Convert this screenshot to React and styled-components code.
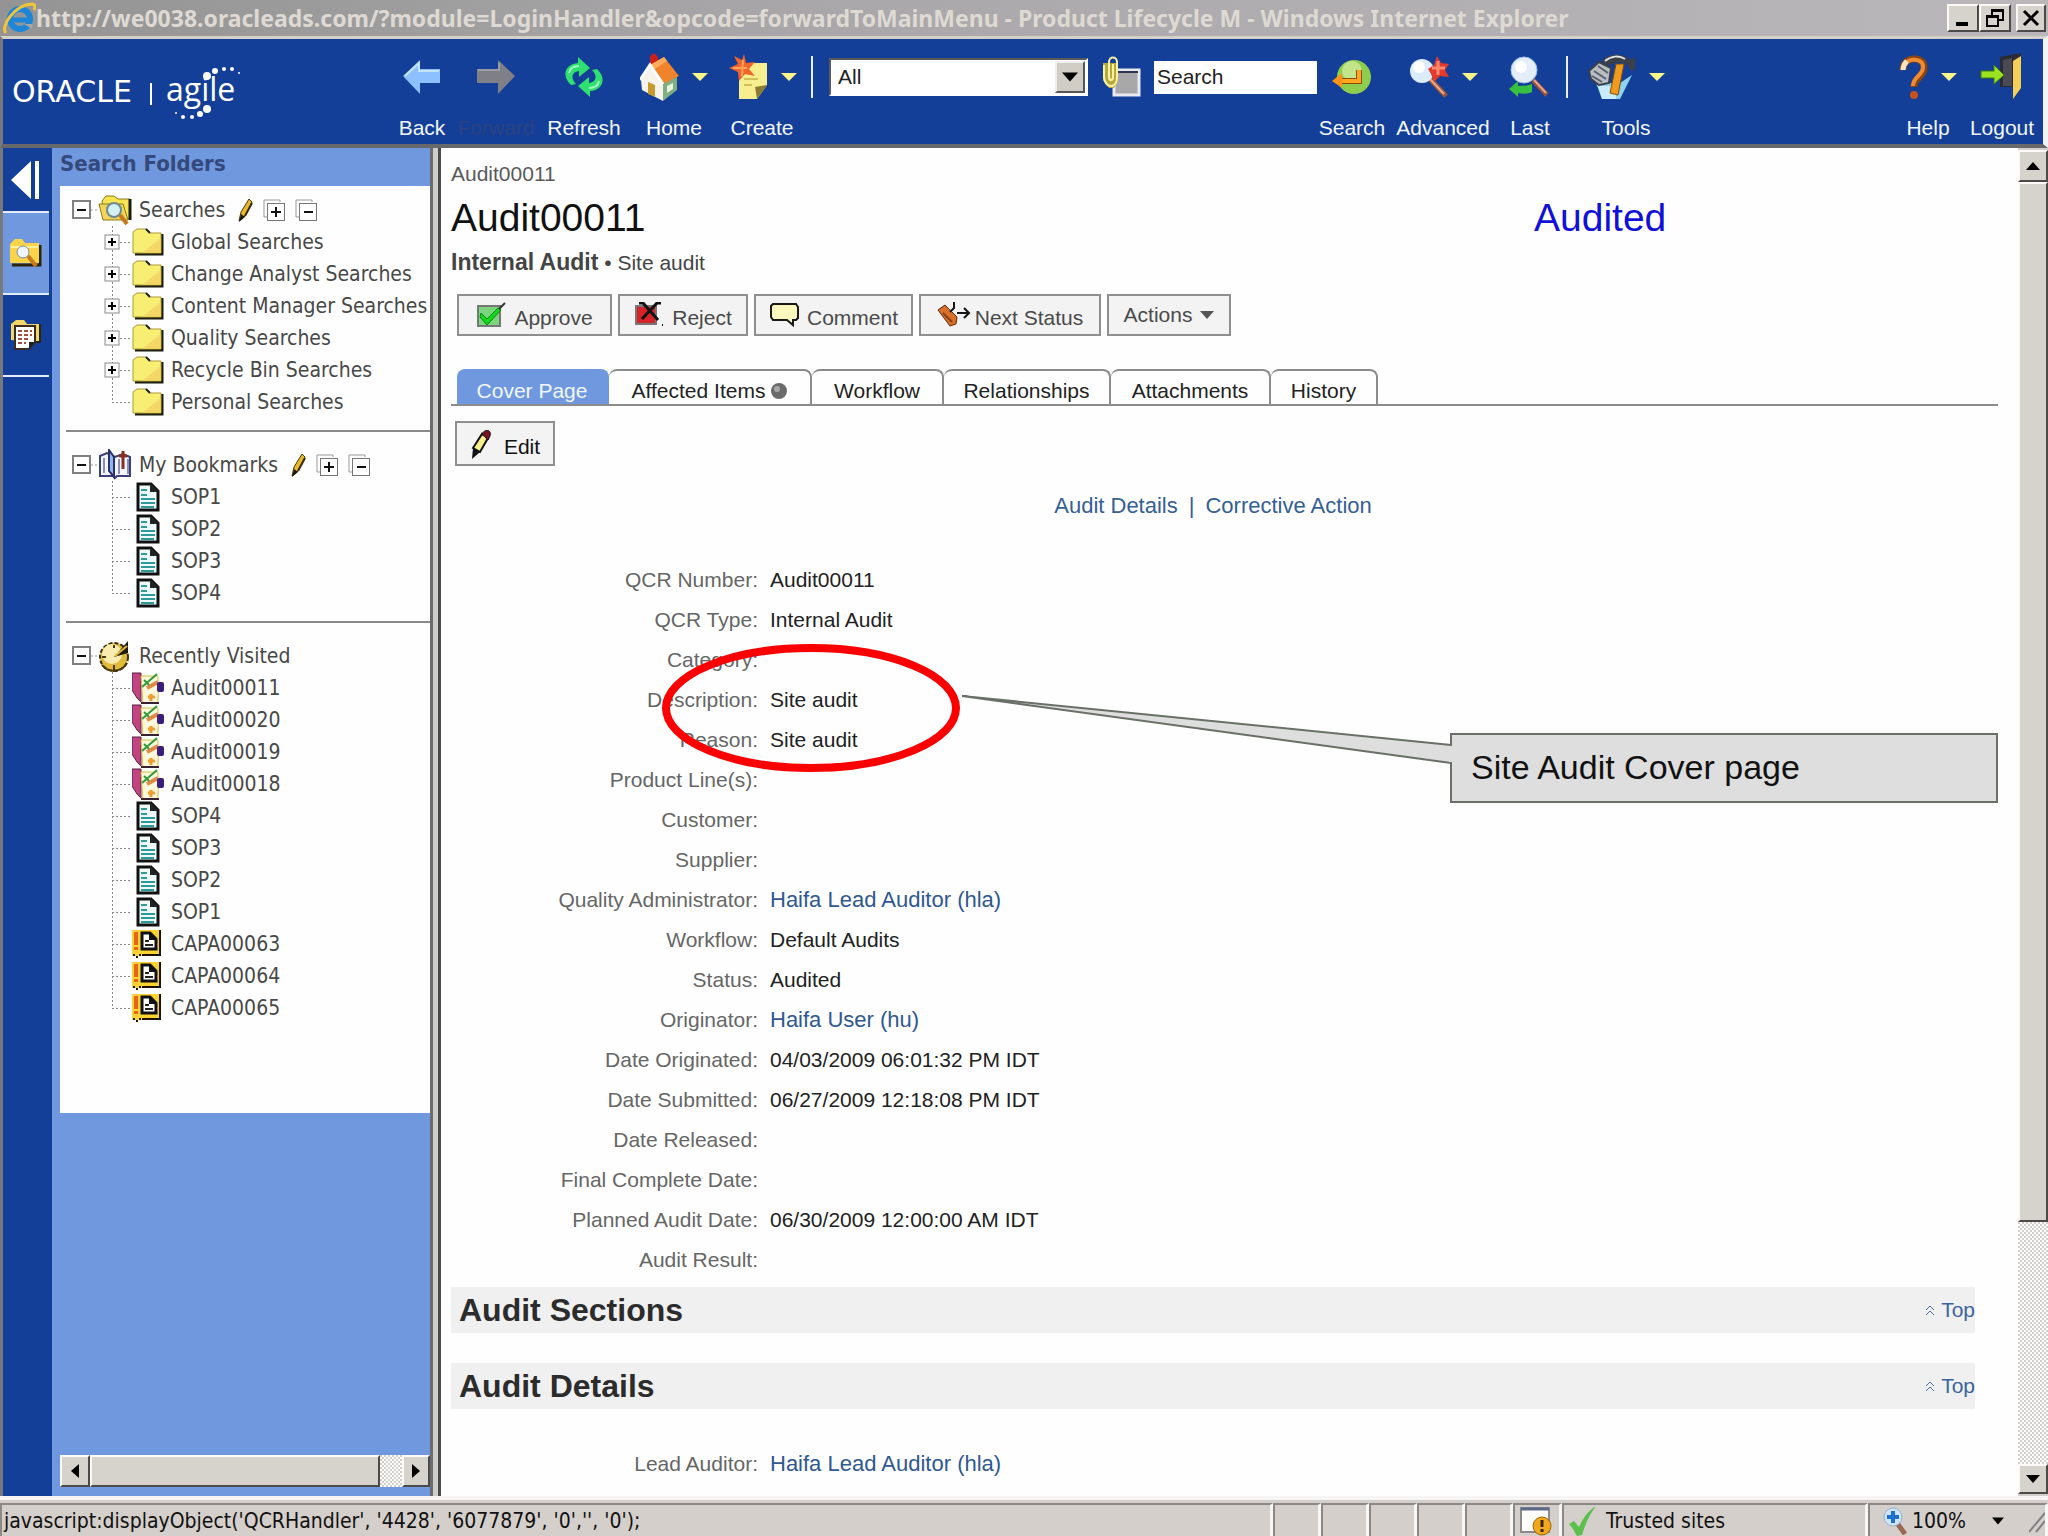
import React from "react";
import styled, { createGlobalStyle } from "styled-components";

const UI = `"DejaVu Sans Condensed", "DejaVu Sans", sans-serif`;
const ARIAL = `"Liberation Sans", Arial, sans-serif`;

const GlobalStyle = createGlobalStyle`
  * {
    box-sizing: border-box;
  }

  body {
    margin: 0;
    background: #d5cfcb;
    font-family: ${ARIAL};
    font-size: 21px;
    line-height: 26px;
    color: #1c1c1c;
  }

  button,
  input,
  select {
    font: inherit;
    color: inherit;
    margin: 0;
  }

  a {
    color: inherit;
    text-decoration: none;
  }

  svg {
    display: block;
    flex: none;
  }
`;

/* ---------- icons ---------- */

const IeIcon = () => (
  <svg width="34" height="34" viewBox="0 0 34 34">
    <circle cx="18" cy="18" r="10" fill="none" stroke="#1c86d8" strokeWidth="6" />
    <path d="M10 19h19" stroke="#1c86d8" strokeWidth="5" />
    <path d="M22 23h8v5z" fill="#a6a6a6" />
    <path d="M4 32C-2 26 12 4 30 3c4 0 3 4 2 6" fill="none" stroke="#f0c53a" strokeWidth="3" />
  </svg>
);

const Logo = () => (
  <svg width="250" height="70" viewBox="0 0 250 70" fill="#fff" role="img" aria-label="Oracle Agile">
    <text x="9" y="50" fontFamily="DejaVu Sans" fontSize="30">ORACLE</text>
    <path d="M148 31v22" stroke="#fff" strokeWidth="2" />
    <text x="163" y="49" fontFamily="Open Sans, Noto Sans" fontSize="32">agile</text>
    <circle cx="204" cy="24" r="4" />
    <circle cx="212" cy="19" r="3" />
    <circle cx="221" cy="17" r="2" />
    <circle cx="229" cy="17" r="2" />
    <circle cx="236" cy="21" r="1" />
    <circle cx="204" cy="57" r="4" />
    <circle cx="197" cy="62" r="3" />
    <circle cx="189" cy="65" r="2" />
    <circle cx="180" cy="65" r="2" />
    <circle cx="173" cy="61" r="1" />
  </svg>
);

const BackIcon = () => (
  <svg width="38" height="36" viewBox="0 0 38 36">
    <path d="M0 17L17 1v9h20v14H17v11z" fill="#8cc0ff" />
    <path d="M2 17L16 4v8h20" fill="none" stroke="#c5e2ff" strokeWidth="2" />
  </svg>
);

const ForwardIcon = () => (
  <svg width="38" height="36" viewBox="0 0 38 36">
    <path d="M38 17L21 1v9H0v14h21v11z" fill="#7f7f88" />
    <path d="M1 11h21V4" fill="none" stroke="#9c9ca6" strokeWidth="2" />
  </svg>
);

const RefreshIcon = () => (
  <svg width="42" height="42" viewBox="0 0 42 42" fill="#2fe070">
    <path d="M8 29C-2 20 2 8 15 7V1l12 11-11 9v-6c-7 1-9 7-3 13z" />
    <path d="M34 13c10 9 6 21-7 22v6L15 30l11-9v6c7-1 9-7 3-13z" />
    <path d="M6 17c1-5 5-7 10-7M36 25c-1 5-5 7-10 7" fill="none" stroke="#a5ffc0" strokeWidth="2" />
  </svg>
);

const HomeIcon = () => (
  <svg width="40" height="50" viewBox="0 0 40 50">
    <path d="M10 4l4-3 4 4v10l-8 4z" fill="#c9201f" />
    <path d="M1 28l9-15 13 18v18L2 38z" fill="#f6f3ec" />
    <path d="M23 31l14-6v13L23 49z" fill="#7fae83" />
    <path d="M10 13L24 5l15 19-16 8z" fill="#f0842c" />
    <path d="M10 13L24 5l3 4-14 9z" fill="#ffad5c" />
    <path d="M0 28l10-15 13 19" fill="none" stroke="#fff" strokeWidth="3" />
    <path d="M8 30l7 3v12l-7-3z" fill="#c79a2c" />
    <path d="M27 34l6-3v6l-6 4z" fill="#eaf3df" />
  </svg>
);

const CreateIcon = () => (
  <svg width="42" height="48" viewBox="0 0 42 48">
    <path d="M12 10h28v22L30 46H12z" fill="#f7ef8f" />
    <path d="M40 32L30 46l-2-12z" fill="#8a7a32" />
    <path d="M17 26h14M17 32h8" stroke="#cfc05a" strokeWidth="2" />
    <path d="M17 1l2 9 9-1-6 7 6 7-10-2-6 7-1-9-9-4 9-4-4-8 8 4z" fill="#f1652a" />
    <path d="M16 7l-1 16M6 15h14" stroke="#ffa45c" strokeWidth="2" />
  </svg>
);

const ClipIcon = () => (
  <svg width="40" height="42" viewBox="0 0 40 42">
    <rect x="13" y="14" width="25" height="25" fill="#a8a8a8" stroke="#e9e9f2" strokeWidth="3" />
    <path d="M15 16h22" stroke="#2a3350" strokeWidth="2" />
    <path d="M2 7h15v18l-4 7H8l-6-8z" fill="#b8a840" />
    <path d="M3 9v12c0 6 4 9 7 9 4 0 6-4 6-9V6c0-6-8-6-8 0v15c0 4 4 4 4 0V8" fill="none" stroke="#fbf3a4" strokeWidth="2" />
  </svg>
);

const GoIcon = () => (
  <svg width="40" height="36" viewBox="0 0 40 36">
    <circle cx="22" cy="18" r="17" fill="#8fce4c" />
    <circle cx="20" cy="12" r="10" fill="#c2e48a" />
    <path d="M27 11v11H10" fill="none" stroke="#8a4a00" strokeWidth="6" />
    <path d="M27 11v11H10" fill="none" stroke="#ffa51e" strokeWidth="4" />
    <path d="M0 22l10-8v15z" fill="#ff9416" />
  </svg>
);

const AdvancedIcon = () => (
  <svg width="42" height="44" viewBox="0 0 42 44">
    <path d="M22 24l16 17" stroke="#9d5a3c" strokeWidth="5" />
    <path d="M22 24l14 15" stroke="#f0a888" strokeWidth="2" />
    <circle cx="14" cy="16" r="12" fill="#dcecff" />
    <circle cx="11" cy="12" r="6" fill="#fff" />
    <path d="M29 1l4 7 8 1-4 6 4 7-9-1-6 6-3-8-3-5 6-4z" fill="#e33a2c" />
    <path d="M30 6v14M24 13h13" stroke="#ff8a70" strokeWidth="3" />
  </svg>
);

const LastIcon = () => (
  <svg width="42" height="42" viewBox="0 0 42 42">
    <path d="M24 24l14 15" stroke="#8d5040" strokeWidth="5" />
    <path d="M25 24l12 13" stroke="#e8a68c" strokeWidth="2" />
    <circle cx="15" cy="14" r="13" fill="#e4eefb" stroke="#9cc0ea" strokeWidth="1" />
    <circle cx="12" cy="11" r="6" fill="#fff" />
    <path d="M0 33l9-8v5c5 0 9 0 14-2v8c-4 2-9 2-14 1v4z" fill="#38c040" />
  </svg>
);

const ToolsIcon = () => (
  <svg width="50" height="48" viewBox="0 0 50 48">
    <path d="M9 30l6 16h18l12-24-12 8z" fill="#8ed2f0" />
    <path d="M11 33h18v13H15z" fill="#c8ecfb" />
    <path d="M2 18l10-9 12 6-2 15-10 2-8-6z" fill="#b9bec4" stroke="#3a3f48" strokeWidth="2" />
    <path d="M7 18l12 8M11 13l10 7M5 23l10 6" stroke="#5a606a" strokeWidth="2" />
    <path d="M15 8C20 0 38 0 42 7l6-3v13h-5l-3-6c-8-4-14 0-20 2z" fill="#3c3f46" />
    <path d="M18 8c6-5 14-6 20-2" fill="none" stroke="#dfe3e8" strokeWidth="2" />
    <path d="M29 11h8l-6 31-8-2z" fill="#f09a20" stroke="#7b4a08" strokeWidth="1" />
  </svg>
);

const HelpIcon = () => (
  <svg width="30" height="46" viewBox="0 0 30 46">
    <path d="M4 16C3 2 26 1 25 14c0 9-10 9-10 19" fill="none" stroke="#8a4412" strokeWidth="7" />
    <path d="M4 15C4 3 25 3 24 13c0 9-10 9-10 19" fill="none" stroke="#ee8c34" strokeWidth="4" />
    <path d="M4 16c0-4 2-7 4-9" fill="none" stroke="#ffe4c4" strokeWidth="5" />
    <circle cx="15" cy="41" r="4" fill="#c4521c" />
  </svg>
);

const LogoutIcon = () => (
  <svg width="44" height="48" viewBox="0 0 44 48">
    <path d="M20 4L41 0v34L33 47V34H20z" fill="#2b2b33" />
    <path d="M41 3v32l-8 11V8z" fill="#f5cf55" />
    <path d="M23 7l9-2v28h-9z" fill="#4a4a55" />
    <path d="M1 18h13v-6l10 10-10 9v-6H1z" fill="#9be320" stroke="#3f7a08" strokeWidth="1" />
  </svg>
);

const Caret = () => (
  <svg width="16" height="8" viewBox="0 0 16 8">
    <path d="M0 0h16L8 8z" fill="#fbf68a" />
  </svg>
);

const Triangle = ({ dir = "down", size = 14, color = "#000" }) => {
  const d = { down: "M0 3h14L7 11z", up: "M0 11h14L7 3z", left: "M11 0v14L3 7z", right: "M3 0v14l8-7z" }[dir];
  return (
    <svg width={size} height={size} viewBox="0 0 14 14">
      <path d={d} fill={color} />
    </svg>
  );
};

const CollapseIcon = () => (
  <svg width="30" height="40" viewBox="0 0 30 40">
    <path d="M0 20L20 1v38z" fill="#fff" />
    <path d="M26 1v38" stroke="#fff" strokeWidth="4" />
  </svg>
);

const FolderIcon = () => (
  <svg width="32" height="28" viewBox="0 0 32 28">
    <path d="M30 6v20H3" fill="none" stroke="#1d1d12" strokeWidth="3" />
    <path d="M1 25V4l4-3h9l4 4h11v20z" fill="#f7ee74" stroke="#a99d33" strokeWidth="1" />
    <path d="M29 10v15H10z" fill="#f2cf62" opacity=".7" />
    <path d="M14 1l4 4" stroke="#1d1d12" strokeWidth="2" />
  </svg>
);

const SearchFolderIcon = () => (
  <svg width="34" height="32" viewBox="0 0 34 32">
    <path d="M4 7l4-5h8l4 3h12v20H6z" fill="#f6e452" stroke="#8a7a16" strokeWidth="1" />
    <path d="M32 5v21" stroke="#1d1d12" strokeWidth="3" />
    <path d="M1 10h24l5 16H5z" fill="#f2d65c" stroke="#8a7a16" strokeWidth="1" />
    <circle cx="16" cy="16" r="7" fill="#d4f0f5" stroke="#6d8a90" strokeWidth="2" />
    <path d="M22 21l7 9" stroke="#c8781c" strokeWidth="4" />
  </svg>
);

const RailSearchIcon = () => (
  <svg width="34" height="30" viewBox="0 0 34 30">
    <path d="M3 27h28V7" fill="none" stroke="#2a2410" strokeWidth="3" />
    <path d="M1 25V6l5-5h7l3 4h14v20z" fill="#fbd44a" />
    <path d="M2 9h27" stroke="#fff0a0" strokeWidth="2" />
    <circle cx="14" cy="14" r="6" fill="#eef6fb" stroke="#7a8ea0" strokeWidth="1" />
    <path d="M19 18l8 10" stroke="#c87a1c" strokeWidth="4" />
  </svg>
);

const RailReportIcon = () => (
  <svg width="34" height="34" viewBox="0 0 34 34">
    <path d="M2 22V6l5-4h8l3 4h13v18H20z" fill="#f0d668" />
    <path d="M31 6v18H20" fill="none" stroke="#2a2410" strokeWidth="2" />
    <path d="M6 8h20v16l-6 7H6z" fill="#fff" stroke="#3a2c20" strokeWidth="2" />
    <path d="M26 24l-6 7v-7z" fill="#222" />
    <path d="M9 13h14M9 17h14M9 21h12M9 25h8" stroke="#a5503c" strokeWidth="2" strokeDasharray="4 2" />
  </svg>
);

const BookIcon = () => (
  <svg width="34" height="32" viewBox="0 0 34 32">
    <path d="M2 27V7l7-3 8 4 8-3 7 3v19H19l-2 2-2-2z" fill="#f3f5ff" stroke="#3c3f7a" strokeWidth="2" />
    <path d="M11 1l5 7v20l-5-6z" fill="#8fb8ee" stroke="#2b2f6a" strokeWidth="2" />
    <path d="M6 9v15M21 10v15M30 10v15" stroke="#8b8fb8" strokeWidth="2" />
    <path d="M25 2v18M21 7h8" stroke="#8a2f1e" strokeWidth="3" />
  </svg>
);

const ClockIcon = () => (
  <svg width="34" height="34" viewBox="0 0 34 34">
    <circle cx="16" cy="18" r="14" fill="#e2bb3c" stroke="#3b3010" strokeWidth="2" strokeDasharray="4 2" />
    <circle cx="14" cy="15" r="10" fill="#f8ecb0" />
    <path d="M16 18L30 2v12z" fill="#1f1a08" />
    <path d="M17 17L29 7" stroke="#e2bb3c" strokeWidth="2" />
    <path d="M4 26c6 8 19 8 25-2M16 26v7M16 6v3M4 18h4" fill="none" stroke="#4a3a08" strokeWidth="2" />
  </svg>
);

const DocIcon = () => (
  <svg width="32" height="30" viewBox="0 0 32 30">
    <path d="M6 2h13l7 7v19H6z" fill="#eefafa" stroke="#111" strokeWidth="3" />
    <path d="M18 1v9h9z" fill="#222" />
    <path d="M9 8h6M9 13h6M9 17h14M9 21h14M9 25h13" stroke="#2c9a98" strokeWidth="2" />
  </svg>
);

const AuditIcon = () => (
  <svg width="32" height="32" viewBox="0 0 32 32">
    <path d="M0 1h9v29l-4-4-5-8z" fill="#c04482" stroke="#5f1c40" strokeWidth="1" />
    <path d="M9 4h17v27H11z" fill="#fdf8dc" stroke="#d8c04a" strokeWidth="1" />
    <path d="M9 31h18" stroke="#3b2030" strokeWidth="2" />
    <path d="M10 15L25 2M12 8l6 6" stroke="#2f9a3a" strokeWidth="2" />
    <path d="M15 16l11-6" stroke="#e08a48" strokeWidth="4" />
    <rect x="25" y="10" width="7" height="10" rx="2" fill="#3a1f7a" />
    <path d="M16 25h7M19 22v7" stroke="#ef9a2c" strokeWidth="3" />
  </svg>
);

const CapaIcon = () => (
  <svg width="32" height="30" viewBox="0 0 32 30">
    <rect x="0" y="1" width="28" height="26" fill="#fbd331" />
    <path d="M28 1v25H10" fill="none" stroke="#1a1408" strokeWidth="2" />
    <path d="M4 3v13M4 18v3" stroke="#e8641c" strokeWidth="4" />
    <path d="M1 26h2M4 28h2M7 26h2" stroke="#1a1408" strokeWidth="2" />
    <path d="M10 4h8l6 6v10H10z" fill="#fff" stroke="#111" strokeWidth="3" />
    <path d="M17 3v8h8z" fill="#111" />
    <path d="M13 12h4M13 16h8" stroke="#222" strokeWidth="2" />
  </svg>
);

const PencilIcon = () => (
  <svg width="16" height="26" viewBox="0 0 16 26">
    <path d="M2 24l2-9L12 2l3 3-7 14z" fill="#e9b92c" stroke="#4a3608" strokeWidth="1" />
    <path d="M8 19l7-13" stroke="#3a2a06" strokeWidth="2" />
    <path d="M2 25l2-8 4 3z" fill="#1c1608" />
  </svg>
);

const ExpandAllIcon = ({ minus }) => (
  <svg width="22" height="22" viewBox="0 0 22 22" fill="none" stroke="#999">
    <path d="M17 3V1H1v17h3" />
    <rect x="4.5" y="4.5" width="17" height="17" fill="#fff" stroke="#777" />
    <path d={minus ? "M9 13h9" : "M8 13h10M13 8v10"} stroke="#111" strokeWidth="2" />
  </svg>
);

const RootToggle = () => (
  <svg width="26" height="32" viewBox="0 0 26 32" fill="none">
    <rect x="1" y="7" width="17" height="17" fill="#fff" stroke="#808080" strokeWidth="2" />
    <path d="M5 16h9" stroke="#111" strokeWidth="2" />
    <path d="M19 16h7" stroke="#999" strokeDasharray="2 2" />
  </svg>
);

const Branch = ({ last, toggle }) => (
  <svg width="28" height="32" viewBox="0 0 28 32" fill="none">
    <path d={last ? "M8.5 0v16" : "M8.5 0v32"} stroke="#888" strokeDasharray="2 2" />
    <path d="M8 16.5h20" stroke="#888" strokeDasharray="2 2" />
    {toggle && (
      <g>
        <rect x="1" y="9" width="14" height="14" fill="#fff" stroke="#8a8a8a" />
        <path d="M4 16h8M8 12v8" stroke="#000" strokeWidth="2" />
      </g>
    )}
  </svg>
);

const ApproveIcon = () => (
  <svg width="30" height="26" viewBox="0 0 30 26">
    <rect x="2" y="4" width="22" height="20" fill="#7ad67c" stroke="#777" strokeWidth="2" />
    <path d="M5 11l6 6L22 6l3 2-14 15-7-8z" fill="#10d81c" stroke="#0d8415" strokeWidth="1" />
    <path d="M23 7l6-6" stroke="#333" strokeWidth="2" />
  </svg>
);

const RejectIcon = () => (
  <svg width="30" height="26" viewBox="0 0 30 26">
    <rect x="2" y="4" width="20" height="18" fill="#d8222a" stroke="#777" strokeWidth="2" />
    <path d="M5 1h4l15 17M27 1h-4L8 17" fill="none" stroke="#111" strokeWidth="3" />
    <path d="M28 23h1" stroke="#111" strokeWidth="2" />
  </svg>
);

const CommentIcon = () => (
  <svg width="30" height="26" viewBox="0 0 30 26">
    <path d="M4 2h23l2 3v11l-2 2h-3v5l-6-5H4l-2-3V4z" fill="#fbf7bd" stroke="#1a1a1a" strokeWidth="2" />
  </svg>
);

const NextStatusIcon = () => (
  <svg width="34" height="28" viewBox="0 0 34 28">
    <path d="M1 9l7-5 12 12-1 7-6 2z" fill="#d8702a" stroke="#5a2a10" strokeWidth="1" />
    <path d="M6 12l9 9" stroke="#8a3f14" strokeWidth="2" />
    <path d="M17 1v6l-4 4M20 12h12M27 7l5 5-5 5" fill="none" stroke="#151515" strokeWidth="2" />
  </svg>
);

const EditIcon = () => (
  <svg width="22" height="32" viewBox="0 0 22 32">
    <path d="M3 20L12 6l6 4-8 14z" fill="#f7ef8a" stroke="#111" strokeWidth="2" />
    <path d="M12 6c2-5 10-5 8 2l-2 4z" fill="#7a1420" stroke="#111" strokeWidth="1" />
    <path d="M2 31l1-11 7 4z" fill="#111" />
  </svg>
);

const DotIcon = () => (
  <svg width="16" height="16" viewBox="0 0 16 16">
    <circle cx="8" cy="8" r="8" fill="#6b6b6b" />
    <circle cx="6" cy="6" r="3" fill="#a8a8a8" />
  </svg>
);

const TopIcon = () => (
  <svg width="10" height="12" viewBox="0 0 10 12" fill="none" stroke="#4a72a4">
    <path d="M1 6l4-4 4 4M1 11l4-4 4 4" />
  </svg>
);

const PopupIcon = () => (
  <svg width="34" height="30" viewBox="0 0 34 30">
    <path d="M2 2h28v24H2z" fill="#fdfdfb" stroke="#8a8a8a" strokeWidth="2" />
    <path d="M2 3h28" stroke="#5c6a8a" strokeWidth="3" />
    <circle cx="23" cy="20" r="9" fill="#f2a81c" stroke="#9a6408" strokeWidth="1" />
    <path d="M23 14v7M23 23v3" stroke="#3c2400" strokeWidth="3" />
  </svg>
);

const TrustedIcon = () => (
  <svg width="30" height="30" viewBox="0 0 30 30">
    <path d="M1 18l5-3 5 6C15 12 20 5 28 0c-6 8-11 18-14 29l-5 1C6 25 4 21 1 18z" fill="#5cc04c" />
  </svg>
);

const ZoomIcon = () => (
  <svg width="26" height="28" viewBox="0 0 26 28">
    <path d="M15 16l8 11" stroke="#9a6a54" strokeWidth="5" />
    <circle cx="11" cy="10" r="9" fill="#cfe4f7" stroke="#8fb4d8" strokeWidth="1" />
    <path d="M11 4v12M5 10h12" stroke="#1f6fd0" strokeWidth="4" />
  </svg>
);

const GripIcon = () => (
  <svg width="16" height="24" viewBox="0 0 16 24">
    <path d="M0 23L16 4M7 23l9-11" stroke="#808080" strokeWidth="2" />
  </svg>
);

/* ---------- window chrome ---------- */

const Window = styled.div`
  display: flex;
  flex-direction: column;
  height: 100vh;
  overflow: hidden;
`;

const TitleBar = styled.header`
  display: flex;
  align-items: center;
  height: 36px;
  padding: 0 2px;
  background: linear-gradient(90deg, #949494, #a9a7a9 40%, #b9b7b9);
  color: #dedad3;
  flex: none;
`;

const TitleText = styled.h1`
  flex: 1;
  margin: 0;
  font: bold 23px/30px "Noto Sans", sans-serif;
  white-space: nowrap;
`;

const WindowButtons = styled.div`
  display: flex;

  button:last-child {
    margin-left: 5px;
  }
`;

const Bevel = styled.button`
  display: flex;
  align-items: center;
  justify-content: center;
  flex: none;
  width: ${(p) => p.$w || 30}px;
  height: ${(p) => p.$h || 30}px;
  padding: 0;
  background: #d6d2cc;
  border: 2px solid;
  border-color: #fbfaf8 #4c4a48 #4c4a48 #fbfaf8;
`;

const Toolbar = styled.nav`
  display: flex;
  align-items: flex-start;
  flex: none;
  height: 112px;
  padding-top: 13px;
  padding-right: 5px;
  background: #133f98;
  border: solid;
  border-width: 3px 5px 4px 3px;
  border-color: #d4d0c8 #f4f4f4 #66686c #77787a;
  color: #fff;
`;

const Brand = styled.div`
  display: flex;
  flex: none;
  width: 387px;
`;

const Tool = styled.button`
  display: flex;
  flex-direction: column;
  align-items: center;
  gap: 13px;
  flex: none;
  width: ${(p) => p.$w}px;
  padding: 0;
  border: 0;
  background: none;
  color: ${(p) => (p.disabled ? "#2b4180" : "#f2f6ff")};
`;

const IconRow = styled.span`
  display: flex;
  align-items: center;
  gap: 12px;
  height: 50px;
`;

const Divider = styled.span`
  flex: none;
  width: 2px;
  height: 42px;
  margin: 4px ${(p) => p.$after}px 0 5px;
  background: #e8eefc;
`;

const Combo = styled.div`
  display: flex;
  position: relative;
  width: 259px;
  height: 38px;
  border: 2px solid;
  border-color: #5a5a5a #fff #fff #5a5a5a;

  select {
    flex: 1;
    appearance: none;
    border: 0;
    border-radius: 0;
    padding: 0 7px;
    background: #fff;
    color: #222;
  }
`;

const ComboArrow = styled.span`
  display: flex;
  align-items: center;
  justify-content: center;
  position: absolute;
  right: 1px;
  top: 1px;
  bottom: 1px;
  width: 30px;
  background: #d0cdc6;
  border: 2px solid;
  border-color: #eee #555 #555 #eee;
  pointer-events: none;
`;

const SearchBox = styled.input`
  width: 163px;
  height: 33px;
  padding: 0 3px;
  border: 0;
  background: #fff;
  color: #222;
`;

const Spacer = styled.span`
  flex: 1;
`;

const Controls = styled.div`
  display: flex;
  align-items: center;
  gap: 13px;
  height: 50px;
`;

/* ---------- left side ---------- */

const Body = styled.div`
  display: flex;
  flex: 1;
  min-height: 0;
  border-left: 3px solid #77787a;
`;

const Rail = styled.aside`
  width: 49px;
  flex: none;
  background: #133f98;
`;

const RailButton = styled.button`
  display: flex;
  align-items: center;
  justify-content: center;
  width: 46px;
  height: ${(p) => p.$h}px;
  padding: 0;
  border: 0;
  border-bottom: 2px solid #e4ecfa;
  background: ${(p) => (p.$active ? "#7098de" : "none")};
`;

const Sidebar = styled.aside`
  display: flex;
  flex-direction: column;
  flex: none;
  width: 378px;
  padding: 3px 0 9px 8px;
  background: #7098de;
`;

const SidebarTitle = styled.h2`
  margin: 0;
  height: 35px;
  font: bold 22px/26px ${UI};
  color: #34497c;
`;

const TreeBox = styled.div`
  min-height: 927px;
  padding: 8px 0;
  background: #fefefe;
  font-family: ${UI};
  color: #484848;
`;

const Group = styled.section`
  margin-left: 6px;
  padding-left: 6px;

  & + & {
    margin-top: 12px;
    padding-top: 17px;
    border-top: 2px solid #8a8a8a;
  }

  ul {
    margin: 0;
    padding: 0 0 0 32px;
    list-style: none;
  }
`;

const TreeRow = styled.div`
  display: flex;
  align-items: center;
  height: 32px;
  white-space: nowrap;
`;

const TreeLabel = styled.a`
  padding-left: 7px;
`;

const HeadTools = styled.span`
  display: flex;
  align-items: center;
  gap: 10px;
  padding-left: 12px;
`;

const HScroll = styled.div`
  display: flex;
  height: 32px;
  margin: auto 0 0;
`;

const Track = styled.span`
  flex: 1;
  background: repeating-conic-gradient(#fff 0 25%, #d2cfca 0 50%) 0 0 / 4px 4px;
`;

const Splitter = styled.div`
  flex: none;
  width: 11px;
  background: #cfcdca;
  border-left: 3px solid #6c6c70;
  border-right: 3px solid #4a4a4a;
`;

const VScroll = styled.div`
  display: flex;
  flex-direction: column;
  flex: none;
  width: 30px;
  padding: 2px 0;
`;

/* ---------- content ---------- */

const Content = styled.main`
  flex: 1;
  min-width: 0;
  padding: 13px 20px 0 10px;
  background: #fefefe;
  overflow: hidden;
`;

const Crumb = styled.div`
  color: #5a5a5a;
`;

const Headline = styled.div`
  display: flex;
  margin: 9px 0 10px;
  font-size: 39px;
  line-height: 44px;

  h2 {
    flex: 0 0 1083px;
    margin: 0;
    font: inherit;
    color: #111;
  }

  strong {
    font-weight: normal;
    color: #1010d8;
  }
`;

const Subtitle = styled.p`
  margin: 0;
  color: #444;

  b {
    font-size: 23px;
    line-height: 20px;
  }
`;

const Actions = styled.div`
  display: flex;
  gap: 6px;
  margin: 18px 0 33px 6px;
`;

const ActionButton = styled.button`
  display: flex;
  align-items: center;
  justify-content: center;
  gap: ${(p) => p.$gap ?? 8}px;
  width: ${(p) => p.$w}px;
  height: ${(p) => p.$h || 42}px;
  padding: 0;
  border: 2px solid #8f8f8f;
  background: #f3f3f3;
  color: ${(p) => (p.$dark ? "#111" : "#4a4a4a")};
  white-space: nowrap;

  span {
    padding-top: 6px;
  }
`;

const Tabs = styled.div`
  display: flex;
  height: 37px;
  padding-left: 6px;
  margin-bottom: 15px;
  border-bottom: 2px solid #8c8c8c;
`;

const Tab = styled.button`
  display: flex;
  align-items: center;
  justify-content: center;
  gap: 6px;
  width: ${(p) => p.$w}px;
  padding: 6px 0 0;
  border: solid ${(p) => (p.$active ? "#7098de" : "#8c8c8c")};
  border-width: 2px 2px 0 0;
  border-radius: 8px 8px 0 0;
  background: ${(p) => (p.$active ? "#7098de" : "#fefefe")};
  color: ${(p) => (p.$active ? "#f2f7ff" : "#222")};
  white-space: nowrap;
`;

const EditBar = styled.div`
  padding-left: 4px;
`;

const Jump = styled.nav`
  display: flex;
  justify-content: center;
  gap: 11px;
  margin: 27px 23px 41px 0;
  font-size: 22px;
  color: #355f95;
`;

const Fields = styled.dl`
  display: grid;
  grid-template-columns: 307px 1fr;
  grid-auto-rows: 40px;
  column-gap: 12px;
  align-items: center;
  position: relative;
  margin: 0;

  dt {
    text-align: right;
    color: #666;
  }

  dd {
    margin: 0;
    color: #222;
  }

  a {
    font-size: 22px;
    color: #2f5890;
  }
`;

const SectionBar = styled.div`
  display: flex;
  align-items: center;
  justify-content: space-between;
  height: 46px;
  margin: ${(p) => p.$top}px 23px ${(p) => p.$bottom || 0}px 0;
  padding-left: 8px;
  background: #f0f0f1;

  h3 {
    margin: 0;
    font-size: 32px;
    line-height: 40px;
    color: #2c2c2c;
  }

  a {
    display: flex;
    align-items: center;
    gap: 6px;
    color: #3a659c;
  }
`;

const Marker = styled.svg`
  position: absolute;
  left: 207px;
  top: 80px;
`;

const Callout = styled.div`
  display: flex;
  align-items: center;
  position: absolute;
  left: 999px;
  top: 173px;
  width: 548px;
  height: 70px;
  padding: 0 0 3px 19px;
  border: 2px solid #6a6f68;
  background: #dedede;
  color: #111;
  font-size: 34px;
  line-height: 40px;
`;

const Pointer = styled.svg`
  position: absolute;
  left: 510px;
  top: 135px;
`;

/* ---------- status bar ---------- */

const StatusBar = styled.footer`
  display: flex;
  flex: none;
  height: 40px;
  padding-top: 3px;
  border-top: 4px solid #f6f5f3;
  background: #d5cfcb;
  font-family: ${UI};
  color: #111;
`;

const Cell = styled.div`
  display: flex;
  align-items: center;
  gap: ${(p) => p.$gap || 0}px;
  flex: ${(p) => (p.$w ? `0 0 ${p.$w}px` : "1")};
  padding-left: ${(p) => p.$pad ?? 2}px;
  border: solid;
  border-width: 2px 3px 0 2px;
  border-color: #8b8886 #f8f7f5 #8b8886 #8b8886;
  white-space: nowrap;
`;

/* ---------- data ---------- */

const groups = [
  {
    name: "Searches",
    icon: SearchFolderIcon,
    editable: true,
    items: [
      "Global Searches",
      "Change Analyst Searches",
      "Content Manager Searches",
      "Quality Searches",
      "Recycle Bin Searches",
      "Personal Searches",
    ],
  },
  { name: "My Bookmarks", icon: BookIcon, editable: true, items: ["SOP1", "SOP2", "SOP3", "SOP4"] },
  {
    name: "Recently Visited",
    icon: ClockIcon,
    items: [
      "Audit00011",
      "Audit00020",
      "Audit00019",
      "Audit00018",
      "SOP4",
      "SOP3",
      "SOP2",
      "SOP1",
      "CAPA00063",
      "CAPA00064",
      "CAPA00065",
    ],
  },
];

const tabs = [
  ["Cover Page", 152],
  ["Affected Items", 203],
  ["Workflow", 132],
  ["Relationships", 167],
  ["Attachments", 160],
  ["History", 107],
];

const fields = [
  ["QCR Number", "Audit00011"],
  ["QCR Type", "Internal Audit"],
  ["Category", ""],
  ["Description", "Site audit"],
  ["Reason", "Site audit"],
  ["Product Line(s)", ""],
  ["Customer", ""],
  ["Supplier", ""],
  ["Quality Administrator", "Haifa Lead Auditor (hla)", true],
  ["Workflow", "Default Audits"],
  ["Status", "Audited"],
  ["Originator", "Haifa User (hu)", true],
  ["Date Originated", "04/03/2009 06:01:32 PM IDT"],
  ["Date Submitted", "06/27/2009 12:18:08 PM IDT"],
  ["Date Released", ""],
  ["Final Complete Date", ""],
  ["Planned Audit Date", "06/30/2009 12:00:00 AM IDT"],
  ["Audit Result", ""],
];

const iconFor = (name) => {
  if (name.startsWith("SOP")) return <DocIcon />;
  if (name.startsWith("Audit")) return <AuditIcon />;
  if (name.startsWith("CAPA")) return <CapaIcon />;
  return <FolderIcon />;
};

/* ---------- parts ---------- */

const ToolButton = ({ icon, label, w, menu, disabled }) => (
  <Tool $w={w} disabled={disabled}>
    <IconRow>
      {icon}
      {menu && <Caret />}
    </IconRow>
    <span>{label}</span>
  </Tool>
);

const TreeGroup = ({ name, icon: Icon, editable, items }) => (
  <Group>
    <TreeRow>
      <RootToggle />
      <Icon />
      <TreeLabel href="#">{name}</TreeLabel>
      {editable && (
        <HeadTools>
          <PencilIcon />
          <ExpandAllIcon />
          <ExpandAllIcon minus />
        </HeadTools>
      )}
    </TreeRow>
    <ul>
      {items.map((item, i) => (
        <li key={item}>
          <TreeRow>
            <Branch
              last={i === items.length - 1}
              toggle={name === "Searches" && i < items.length - 1}
            />
            {iconFor(item)}
            <TreeLabel href="#">{item}</TreeLabel>
          </TreeRow>
        </li>
      ))}
    </ul>
  </Group>
);

const FieldRow = ({ label, value, link }) => (
  <>
    <dt>{label}:</dt>
    <dd>{link ? <a href="#">{value}</a> : value}</dd>
  </>
);

const TopLink = () => (
  <a href="#">
    <TopIcon />
    Top
  </a>
);

const App = () => {
  return (
    <Window>
      <GlobalStyle />
      <TitleBar>
        <IeIcon />
        <TitleText>
          http://we0038.oracleads.com/?module=LoginHandler&amp;opcode=forwardToMainMenu - Product
          Lifecycle M - Windows Internet Explorer
        </TitleText>
        <WindowButtons>
          <Bevel $w={32} $h={28} aria-label="Minimize">
            <svg width="18" height="18" viewBox="0 0 18 18">
              <path d="M2 15h12" stroke="#000" strokeWidth="4" />
            </svg>
          </Bevel>
          <Bevel $w={32} $h={28} aria-label="Restore">
            <svg width="20" height="20" viewBox="0 0 20 20" fill="none" stroke="#000" strokeWidth="2">
              <path d="M7 7V2h11v10h-5M7 3h11" />
              <path d="M2 8h11v10H2zM2 9h11" />
            </svg>
          </Bevel>
          <Bevel $w={30} $h={28} aria-label="Close">
            <svg width="18" height="18" viewBox="0 0 18 18">
              <path d="M2 2l14 14M16 2L2 16" stroke="#000" strokeWidth="3" />
            </svg>
          </Bevel>
        </WindowButtons>
      </TitleBar>

      <Toolbar>
        <Brand>
          <Logo />
        </Brand>
        <ToolButton w={64} icon={<BackIcon />} label="Back" />
        <ToolButton w={84} icon={<ForwardIcon />} label="Forward" disabled />
        <ToolButton w={92} icon={<RefreshIcon />} label="Refresh" />
        <ToolButton w={88} icon={<HomeIcon />} label="Home" menu />
        <ToolButton w={88} icon={<CreateIcon />} label="Create" menu />
        <Divider $after={16} />
        <Controls>
          <Combo>
            <select aria-label="Search in" defaultValue="All">
              <option>All</option>
            </select>
            <ComboArrow>
              <Triangle size={16} />
            </ComboArrow>
          </Combo>
          <ClipIcon />
          <SearchBox aria-label="Search text" defaultValue="Search" />
        </Controls>
        <ToolButton w={70} icon={<GoIcon />} label="Search" />
        <ToolButton w={112} icon={<AdvancedIcon />} label="Advanced" menu />
        <ToolButton w={62} icon={<LastIcon />} label="Last" />
        <Divider $after={12} />
        <ToolButton w={92} icon={<ToolsIcon />} label="Tools" menu />
        <Spacer />
        <ToolButton w={76} icon={<HelpIcon />} label="Help" menu />
        <ToolButton w={72} icon={<LogoutIcon />} label="Logout" />
      </Toolbar>

      <Body>
        <Rail>
          <RailButton $h={65} aria-label="Collapse">
            <CollapseIcon />
          </RailButton>
          <RailButton $h={82} $active aria-label="Search folders">
            <RailSearchIcon />
          </RailButton>
          <RailButton $h={82} aria-label="Reports">
            <RailReportIcon />
          </RailButton>
        </Rail>

        <Sidebar>
          <SidebarTitle>Search Folders</SidebarTitle>
          <TreeBox>
            {groups.map((g) => (
              <TreeGroup key={g.name} {...g} />
            ))}
          </TreeBox>
          <HScroll>
            <Bevel $w={30} $h={32} aria-label="Scroll left">
              <Triangle dir="left" />
            </Bevel>
            <Bevel as="span" $w={290} $h={32} />
            <Track />
            <Bevel $w={28} $h={32} aria-label="Scroll right">
              <Triangle dir="right" />
            </Bevel>
          </HScroll>
        </Sidebar>

        <Splitter />

        <Content>
          <Crumb>Audit00011</Crumb>
          <Headline>
            <h2>Audit00011</h2>
            <strong>Audited</strong>
          </Headline>
          <Subtitle>
            <b>Internal Audit</b> • Site audit
          </Subtitle>

          <Actions>
            <ActionButton $w={155}>
              <ApproveIcon />
              <span>Approve</span>
            </ActionButton>
            <ActionButton $w={130}>
              <RejectIcon />
              <span>Reject</span>
            </ActionButton>
            <ActionButton $w={159}>
              <CommentIcon />
              <span>Comment</span>
            </ActionButton>
            <ActionButton $w={182} $gap={4}>
              <NextStatusIcon />
              <span>Next Status</span>
            </ActionButton>
            <ActionButton $w={124}>
              Actions
              <Triangle color="#555" />
            </ActionButton>
          </Actions>

          <Tabs>
            {tabs.map(([name, w], i) => (
              <Tab key={name} $w={w} $active={i === 0}>
                {name}
                {name === "Affected Items" && <DotIcon />}
              </Tab>
            ))}
          </Tabs>

          <EditBar>
            <ActionButton $w={100} $h={45} $dark $gap={12}>
              <EditIcon />
              <span>Edit</span>
            </ActionButton>
          </EditBar>

          <Jump>
            <a href="#">Audit Details</a>
            <span>|</span>
            <a href="#">Corrective Action</a>
          </Jump>

          <Fields>
            {fields.map(([label, value, link]) => (
              <FieldRow key={label} label={label} value={value} link={link} />
            ))}
            <Marker width="306" height="136" viewBox="0 0 306 136">
              <ellipse cx="153" cy="68" rx="145" ry="60" fill="none" stroke="#fb0000" strokeWidth="8" />
            </Marker>
            <Callout>Site Audit Cover page</Callout>
            <Pointer width="493" height="72" viewBox="0 0 493 72">
              <path d="M490 50L1 1l489 67" fill="#dedede" stroke="#6a6f68" strokeWidth="2" />
              <path d="M488 51h5v16h-5z" fill="#dedede" />
            </Pointer>
          </Fields>

          <SectionBar $top={7}>
            <h3>Audit Sections</h3>
            <TopLink />
          </SectionBar>
          <SectionBar $top={30} $bottom={35}>
            <h3>Audit Details</h3>
            <TopLink />
          </SectionBar>
          <Fields>
            <FieldRow label="Lead Auditor" value="Haifa Lead Auditor (hla)" link />
          </Fields>
        </Content>

        <VScroll>
          <Bevel $w={30} $h={32} aria-label="Scroll up">
            <Triangle dir="up" />
          </Bevel>
          <Bevel as="span" $w={30} $h={1040} />
          <Track />
          <Bevel $w={30} $h={30} aria-label="Scroll down">
            <Triangle />
          </Bevel>
        </VScroll>
      </Body>

      <StatusBar>
        <Cell>javascript:displayObject('QCRHandler', '4428', '6077879', '0','', '0');</Cell>
        <Cell $w={48} />
        <Cell $w={48} />
        <Cell $w={48} />
        <Cell $w={48} />
        <Cell $w={48} />
        <Cell $w={49} $pad={4}>
          <PopupIcon />
        </Cell>
        <Cell $w={306} $pad={4} $gap={8}>
          <TrustedIcon />
          Trusted sites
        </Cell>
        <Cell $w={180} $pad={12} $gap={4}>
          <ZoomIcon />
          100%
          <Spacer />
          <Triangle size={12} />
          <Spacer />
          <GripIcon />
        </Cell>
      </StatusBar>
    </Window>
  );
};

export default App;
